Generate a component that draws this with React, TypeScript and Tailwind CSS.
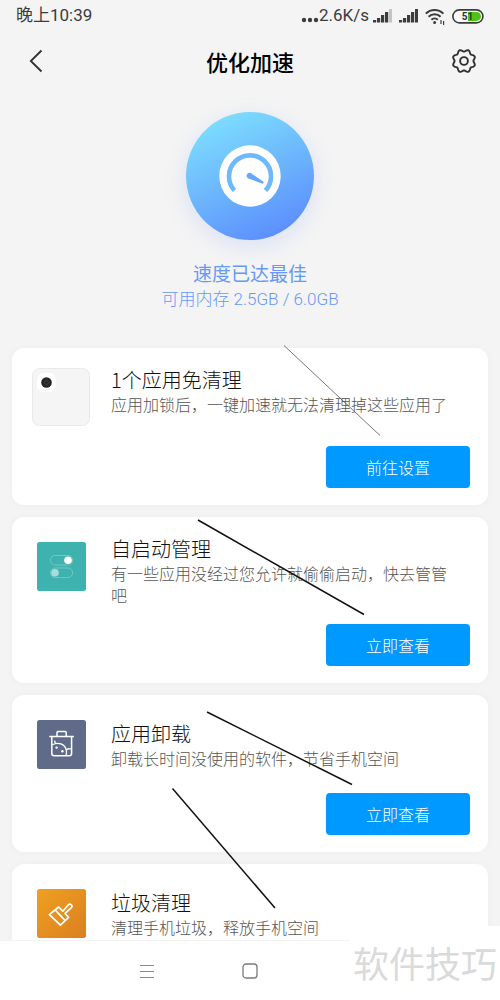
import { ReactNode } from "react";

type CardProps = {
  title: string;
  desc: string;
  action?: string;
  icon: ReactNode;
  alignTop?: boolean;
};

// outline of the settings gear: eight round lobes
const gearPoints = Array.from({ length: 96 }, (_, i) => {
  const a = (i / 96) * Math.PI * 2;
  const r = 10.5 - 1.1 * Math.cos(8 * a);
  return `${(13 + r * Math.cos(a)).toFixed(2)},${(13 + r * Math.sin(a)).toFixed(2)}`;
}).join(" ");

const SignalIcon = ({ weak = false }: { weak?: boolean }) => (
  <svg width="19" height="14" viewBox="0 0 19 14" fill="#3c3c3c" aria-hidden="true">
    <rect x="0" y="11" width="3.2" height="2.5" />
    <rect x="4" y="9" width="3.2" height="4.5" />
    <rect x="8" y="6" width="3.2" height="7.5" />
    <rect x="12" y="3" width="3.2" height="10.5" />
    <rect x="16" y="0" width="3" height="13.5" fill={weak ? "#c4c4c4" : "#3c3c3c"} />
  </svg>
);

const WifiIcon = () => (
  <svg width="20" height="17" viewBox="0 0 20 17" fill="none" stroke="#3c3c3c" strokeWidth="2" aria-hidden="true">
    <path d="M0.8 5.600a12.400 12.400 0 0 1 17.600 0" />
    <path d="M3.600 8.800a8.400 8.400 0 0 1 12 0" />
    <path d="M6.400 11.800a4.600 4.600 0 0 1 6.400 0" />
    <circle cx="9.600" cy="14.400" r="1.500" fill="#3c3c3c" stroke="none" />
    <path d="M16 12v4M18.600 13v4" strokeWidth="1.200" />
  </svg>
);

const BatteryIcon = () => (
  <svg width="32" height="15" viewBox="0 0 32 15" aria-hidden="true">
    <rect x="0.9" y="0.9" width="30" height="13" rx="6.5" fill="#fafafa" stroke="#3c3c3c" strokeWidth="1.6" />
    <path d="M16 3h8.5a4.4 4.4 0 0 1 0 8.9H16z" fill="#4fc414" />
    <text x="15.5" y="11.2" textAnchor="middle" fontSize="10" fontWeight="700" fill="#333" fontFamily="Roboto, sans-serif">
      51
    </text>
  </svg>
);

const GearIcon = () => (
  <svg width="26" height="26" viewBox="0 0 26 26" fill="none" stroke="#303030" strokeWidth="1.9" strokeLinejoin="round" aria-hidden="true">
    <polygon points={gearPoints} />
    <circle cx="13" cy="13" r="3.9" />
  </svg>
);

const GaugeIcon = () => (
  <svg width="62" height="62" viewBox="0 0 62 62" aria-hidden="true">
    <circle cx="31" cy="31" r="30.7" fill="#fff" />
    <path d="M15.5 45.5a21 21 0 1 1 31 0" fill="none" stroke="#6db9fc" strokeWidth="4.6" />
    <path d="M31.8 28.1l12 8.2a1.2 1.2 0 0 1-1 2.2l-13.4-5a2.9 2.9 0 1 1 2.4-5.4z" fill="#64a9fd" />
  </svg>
);

const LockedAppsIcon = () => (
  <svg width="58" height="58" viewBox="0 0 58 58" aria-hidden="true">
    <rect x="0.5" y="0.5" width="57" height="57" rx="7" fill="#f5f5f5" stroke="#e9e9e9" />
    <rect x="5" y="5" width="19" height="19" rx="7" fill="#fff" />
    <circle cx="14.500" cy="14.500" r="5.3" fill="#262626" />
    <circle cx="14.500" cy="14.500" r="2" fill="none" stroke="#4a4a4a" strokeWidth="0.7" />
  </svg>
);

const AutoStartIcon = () => (
  <svg width="49" height="49" viewBox="0 0 49 49" aria-hidden="true">
    <rect width="49" height="49" rx="2.5" fill="#3eb2ae" />
    <rect x="13.4" y="13.4" width="22.2" height="9.6" rx="4.8" fill="none" stroke="#79cbc8" strokeWidth="0.9" />
    <rect x="13.4" y="26" width="22.2" height="9.6" rx="4.8" fill="none" stroke="#79cbc8" strokeWidth="0.9" />
    <circle cx="31" cy="18.2" r="3.8" fill="#fff" />
    <circle cx="18" cy="30.8" r="3.8" fill="#a9dddb" />
  </svg>
);

const UninstallIcon = () => (
  <svg width="49" height="49" viewBox="0 0 49 49" fill="none" stroke="#fff" strokeWidth="1.500" strokeLinejoin="round" aria-hidden="true">
    <rect width="49" height="49" rx="2.5" fill="#5f6b88" stroke="none" />
    <path d="M12.300 16.500h24.600M20 16v-3.600q0-1 1-1h7.200q1 0 1 1V16" />
    <path d="M14.800 17v16.500q0 2.200 2.200 2.200h15.400q2.200 0 2.200-2.200V17" />
    <path d="M15.300 24.800c6-3.400 12.600-.6 14 5.200q.5 2.800-.3 5.200M18.400 23.600l-.8-3M29.400 30l2.400-1.600M31.200 28.800h3" strokeWidth="1.300" />
    <circle cx="19.600" cy="27.600" r="1.200" fill="#fff" stroke="none" />
    <circle cx="25.400" cy="31.200" r="1.200" fill="#fff" stroke="none" />
  </svg>
);

const CleanIcon = () => (
  <svg width="49" height="49" viewBox="0 0 49 49" fill="none" stroke="#fff" strokeWidth="1.700" strokeLinejoin="round" aria-hidden="true">
    <defs>
      <linearGradient id="clean" x1="0" y1="0" x2="1" y2="1">
        <stop offset="0" stopColor="#efa020" />
        <stop offset="1" stopColor="#db7f20" />
      </linearGradient>
    </defs>
    <rect width="49" height="49" rx="2.5" fill="url(#clean)" stroke="none" />
    <path d="M12.400 25.600L21.600 18l4.200 4.200 5.600-6.400a2 2 0 0 1 2.900 2.900L28 24.500l3.600 3.900-8.200 7.800z" />
    <path d="M18.200 21l10 10.600" />
  </svg>
);

const Card = ({ title, desc, action, icon, alignTop = false }: CardProps) => (
  <section className="rounded-xl bg-white px-[18px] pt-[18px] pb-[17px] shadow-[0_0_10px_rgba(0,0,0,0.03)]">
    <div className="flex min-h-[62px] items-center">
      <div className="flex h-[62px] w-[62px] shrink-0 items-center justify-center self-start">{icon}</div>
      <div className={alignTop ? "ml-[19px] flex-1 self-start pr-3" : "ml-[19px] flex-1 pr-3"}>
        <h2 className="text-xl leading-[27px] font-light text-[#111]">{title}</h2>
        <p className="text-base leading-[22px] font-light text-[#555]">{desc}</p>
      </div>
    </div>
    {action && (
      <div className="mt-[18px] flex justify-end">
        <button type="button" className="h-[42px] w-36 rounded bg-[#0099ff] text-base font-light text-white">
          {action}
        </button>
      </div>
    )}
  </section>
);

const App = () => {
  return (
    <div className="relative flex h-screen flex-col overflow-hidden bg-[#f4f4f4] font-['Noto_Sans_CJK_SC',sans-serif]">
      {/* Status bar */}
      <div className="flex h-8 shrink-0 items-center justify-between px-4 font-[Roboto,'Noto_Sans_CJK_SC',sans-serif] text-[17px] text-[#3c3c3c]">
        <span>晚上10:39</span>
        <div className="flex items-center">
          <svg width="18" height="6" viewBox="0 0 18 6" fill="#3c3c3c" className="mt-2" aria-hidden="true">
            <circle cx="3" cy="3" r="2.200" />
            <circle cx="9" cy="3" r="2.200" />
            <circle cx="15" cy="3" r="2.200" />
          </svg>
          <span className="mr-1">2.6K/s</span>
          <div className="flex items-center gap-[7px]">
            <SignalIcon weak />
            <SignalIcon />
            <WifiIcon />
            <BatteryIcon />
          </div>
        </div>
      </div>

      {/* Title bar */}
      <header className="flex h-[58px] shrink-0 items-center justify-between px-[23px]">
        <button type="button" aria-label="返回" className="flex w-[26px] justify-center">
          <svg width="14" height="24" viewBox="0 0 14 24" fill="none" stroke="#303030" strokeWidth="1.8" aria-hidden="true">
            <path d="M12.500 1.500L1.800 12l10.700 10.500" />
          </svg>
        </button>
        <h1 className="text-[22px] leading-8 font-medium text-black">优化加速</h1>
        <button type="button" aria-label="设置">
          <GearIcon />
        </button>
      </header>

      <main className="min-h-0 flex-1 overflow-hidden">
        <div className="flex flex-col items-center pt-[22px] pb-[37px] text-[#6699f7]">
          <div className="flex size-32 items-center justify-center rounded-full bg-linear-[155deg,#7fe3ff_5%,#6cb6fc_50%,#5c8dff_90%] shadow-[0_6px_22px_rgba(92,141,255,0.18)]">
            <GaugeIcon />
          </div>
          <p className="mt-[19px] text-[19px] leading-7">速度已达最佳</p>
          <p className="font-[Roboto,'Noto_Sans_CJK_SC',sans-serif] text-[17px] leading-6 font-light">
            可用内存 2.5GB / 6.0GB
          </p>
        </div>

        <div className="flex flex-col gap-3 px-3">
          <Card
            title="1个应用免清理"
            desc="应用加锁后，一键加速就无法清理掉这些应用了"
            action="前往设置"
            icon={<LockedAppsIcon />}
            alignTop
          />
          <Card
            title="自启动管理"
            desc="有一些应用没经过您允许就偷偷启动，快去管管吧"
            action="立即查看"
            icon={<AutoStartIcon />}
          />
          <Card
            title="应用卸载"
            desc="卸载长时间没使用的软件，节省手机空间"
            action="立即查看"
            icon={<UninstallIcon />}
          />
          <Card title="垃圾清理" desc="清理手机垃圾，释放手机空间" icon={<CleanIcon />} />
        </div>
      </main>

      {/* System navigation */}
      <nav className="flex h-[60px] shrink-0 items-center justify-center gap-[87px] border-t border-[#f3f3f3] bg-white">
        <button type="button" aria-label="菜单">
          <svg width="16" height="16" viewBox="0 0 16 16" stroke="#8a8a8a" strokeWidth="1.2" aria-hidden="true">
            <path d="M1 2.500h14M1 8.500h14M1 14.500h14" />
          </svg>
        </button>
        <button type="button" aria-label="主屏幕">
          <svg width="16" height="16" viewBox="0 0 16 16" fill="none" stroke="#7a7a7a" strokeWidth="1.3" aria-hidden="true">
            <rect x="1" y="1" width="14" height="14" rx="3" />
          </svg>
        </button>
        <span className="w-4" />
      </nav>

      {/* Pointer lines over the cards */}
      <svg
        width="500"
        height="1000"
        viewBox="0 0 500 1000"
        fill="none"
        stroke="#111"
        strokeWidth="1.500"
        className="pointer-events-none absolute top-0 left-0"
        aria-hidden="true"
      >
        <path d="M284 345.500L380 435.500" stroke="#555" strokeWidth="0.8" />
        <path d="M198 520L364 614.500" />
        <path d="M207 712L352 784.500" />
        <path d="M172.500 788.500L275 908" />
      </svg>

      <div className="absolute right-0 bottom-0 flex h-[74px] w-[150px] items-start justify-center bg-white pt-4">
        <span className="text-4xl leading-10 text-[#dadada]">软件技巧</span>
      </div>
    </div>
  );
};

export default App;
